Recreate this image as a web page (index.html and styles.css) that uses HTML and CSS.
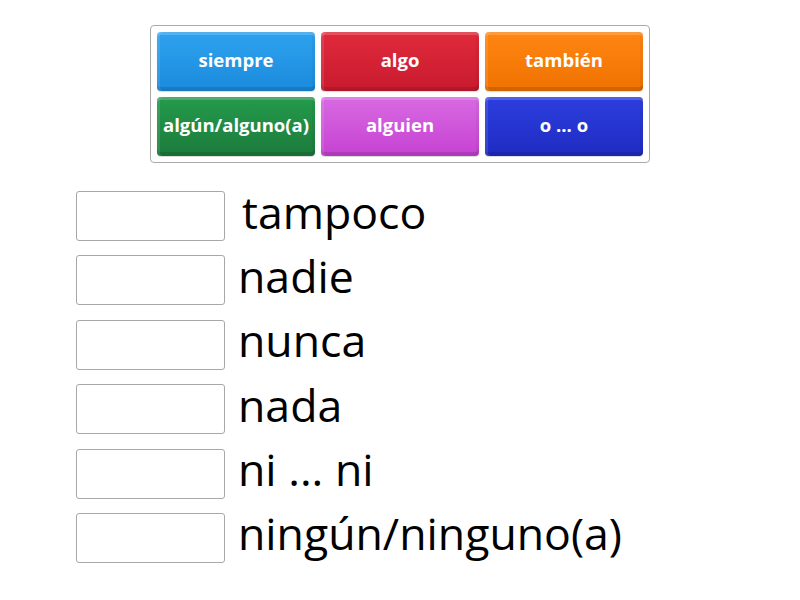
FILE: index.html
```html
<!DOCTYPE html>
<html lang="es">
<head>
<meta charset="utf-8">
<title>Match up</title>
<link rel="stylesheet" href="styles.css">
</head>
<body>
<div class="page">
  <div class="bank">
    <div class="tile blue">siempre</div>
    <div class="tile red">algo</div>
    <div class="tile orange">también</div>
    <div class="tile green">algún/alguno(a)</div>
    <div class="tile purple">alguien</div>
    <div class="tile navy">o ... o</div>
  </div>
  <div class="rows">
    <div class="row"><div class="slot"></div><div class="label first">tampoco</div></div>
    <div class="row"><div class="slot"></div><div class="label">nadie</div></div>
    <div class="row"><div class="slot"></div><div class="label">nunca</div></div>
    <div class="row"><div class="slot"></div><div class="label">nada</div></div>
    <div class="row"><div class="slot"></div><div class="label">ni ... ni</div></div>
    <div class="row"><div class="slot"></div><div class="label">ningún/ninguno(a)</div></div>
  </div>
</div>
</body>
</html>
```
FILE: styles.css
```css
html, body {
  margin: 0;
  padding: 0;
  background: #ffffff;
}
body {
  font-family: "Open Sans", "Liberation Sans", sans-serif;
  width: 800px;
  height: 600px;
  overflow: hidden;
}
.page {
  display: flex;
  flex-direction: column;
  padding-top: 25px;
}
.bank {
  align-self: flex-start;
  margin-left: 150px;
  width: 486px;
  padding: 6px;
  border: 1px solid #a9a9a9;
  border-radius: 4px;
  display: grid;
  grid-template-columns: repeat(3, 158px);
  grid-auto-rows: 59px;
  column-gap: 6px;
  row-gap: 6px;
}
.tile {
  display: flex;
  align-items: center;
  justify-content: center;
  border-radius: 4px;
  color: #ffffff;
  font-weight: 700;
  font-size: 18.5px;
  white-space: nowrap;
  box-shadow: inset 0 3px 0 rgba(255,255,255,0.18), inset 3px 0 0 rgba(255,255,255,0.10), inset -3px 0 0 rgba(0,0,0,0.04), inset 0 -4px 0 rgba(0,0,0,0.12), 0 1px 1px rgba(0,0,0,0.15);
  padding-bottom: 4px;
  box-sizing: border-box;
}
.blue { background: linear-gradient(#2ea2ee, #1b8bdd); }
.red { background: linear-gradient(#e02a3c, #c91b2e); }
.orange { background: linear-gradient(#ff8614, #f07200); }
.green { background: linear-gradient(#249a4c, #1c7c3c); }
.purple { background: linear-gradient(#d86ae2, #c642d2); }
.navy { background: linear-gradient(#2c3ede, #1f2cc2); }
.rows {
  display: flex;
  flex-direction: column;
  row-gap: 14.4px;
  margin-top: 28px;
  margin-left: 76px;
}
.row {
  display: flex;
  align-items: flex-start;
  column-gap: 13px;
}
.slot {
  width: 149px;
  height: 50px;
  border: 1px solid #a8a8a8;
  border-radius: 3px;
  box-sizing: border-box;
  flex: none;
}
.label {
  font-size: 44.6px;
  line-height: 49px;
  margin-top: -4.5px;
  color: #000000;
  white-space: nowrap;
}
.first {
  padding-left: 4px;
}
```
